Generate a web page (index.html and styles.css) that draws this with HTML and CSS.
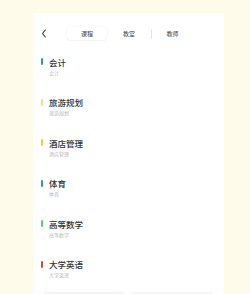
FILE: index.html
```html
<!DOCTYPE html>
<html lang="zh">
<head>
<meta charset="utf-8">
<link rel="stylesheet" href="styles.css">
</head>
<body>
<div class="card">
  <div class="header">
    <div class="back">
      <svg width="6" height="9" viewBox="0 0 6 9"><path d="M4.3 1 L1.5 4.5 L4.3 8" fill="none" stroke="#333" stroke-width="1.1" stroke-linecap="round" stroke-linejoin="round"/></svg>
    </div>
    <div class="tabs">
      <div class="tab active">课程</div>
      <div class="tab">教室</div>
      <div class="divider"></div>
      <div class="tab">教师</div>
    </div>
  </div>
  <div class="list">
    <div class="item"><span class="bar c1"></span><div class="text"><div class="title">会计</div><div class="sub">会计</div></div></div>
    <div class="item"><span class="bar c2"></span><div class="text"><div class="title">旅游规划</div><div class="sub">旅游规划</div></div></div>
    <div class="item"><span class="bar c3"></span><div class="text"><div class="title">酒店管理</div><div class="sub">酒店管理</div></div></div>
    <div class="item"><span class="bar c4"></span><div class="text"><div class="title">体育</div><div class="sub">体育</div></div></div>
    <div class="item"><span class="bar c5"></span><div class="text"><div class="title">高等数学</div><div class="sub">高等数学</div></div></div>
    <div class="item"><span class="bar c6"></span><div class="text"><div class="title">大学英语</div><div class="sub">大学英语</div></div></div>
  </div>
  <div class="boxes">
    <div class="box pink"></div>
    <div class="box cyan"></div>
  </div>
</div>
</body>
</html>
```
FILE: styles.css
```css
html, body {
  margin: 0;
  padding: 0;
  background: #fffbea;
  font-family: "Noto Sans CJK SC", "Noto Sans", sans-serif;
  height: 294px;
  overflow: hidden;
}
.card {
  margin: 13px 0 0 33px;
  width: 191px;
  height: 281px;
  overflow: hidden;
  background: #ffffff;
  box-sizing: border-box;
}
.header {
  display: flex;
  align-items: center;
  padding: 14px 0 0 0;
  height: 13px;
  box-sizing: content-box;
}
.back {
  width: 33px;
  display: flex;
  padding-left: 7.5px;
  box-sizing: border-box;
}
.back svg { display: block; }
.tabs {
  display: flex;
  align-items: center;
}
.tab {
  width: 42px;
  height: 13px;
  line-height: 13px;
  text-align: center;
  font-size: 6px;
  color: #444;
}
.tab.active {
  width: 40px;
  margin: 0 1px;
  background: #fff;
  border-radius: 4px;
  box-shadow: 0 0.5px 2px rgba(0,0,0,0.09);
}
.divider {
  width: 0.5px;
  height: 10px;
  background: #e4e4e4;
  margin: 0 0.5px;
}
.list {
  display: flex;
  flex-direction: column;
  gap: 19.5px;
  padding: 15.5px 0 0 8px;
}
.item {
  display: flex;
  align-items: flex-start;
}
.bar {
  width: 1.5px;
  height: 7px;
  margin-top: 2.5px;
  margin-right: 6.5px;
  border-radius: 1px;
}
.c1 { background: #3a9c88; }
.c2 { background: #f8dc8a; }
.c3 { background: #f4d033; }
.c4 { background: #3f958f; }
.c5 { background: #4fd26c; }
.c6 { background: #e0452f; }
.title {
  font-size: 8.5px;
  line-height: 12px;
  color: #333;
  font-weight: 500;
}
.sub {
  font-size: 5px;
  line-height: 8px;
  margin-top: 1px;
  color: #b8b8b8;
}
.boxes {
  display: flex;
  gap: 7px;
  padding: 13px 0 0 10px;
}
.box {
  height: 20px;
  border-radius: 3px;
}
.pink { width: 81px; background: #fdeef5; }
.cyan { width: 82px; background: #eaf9fa; }
```
